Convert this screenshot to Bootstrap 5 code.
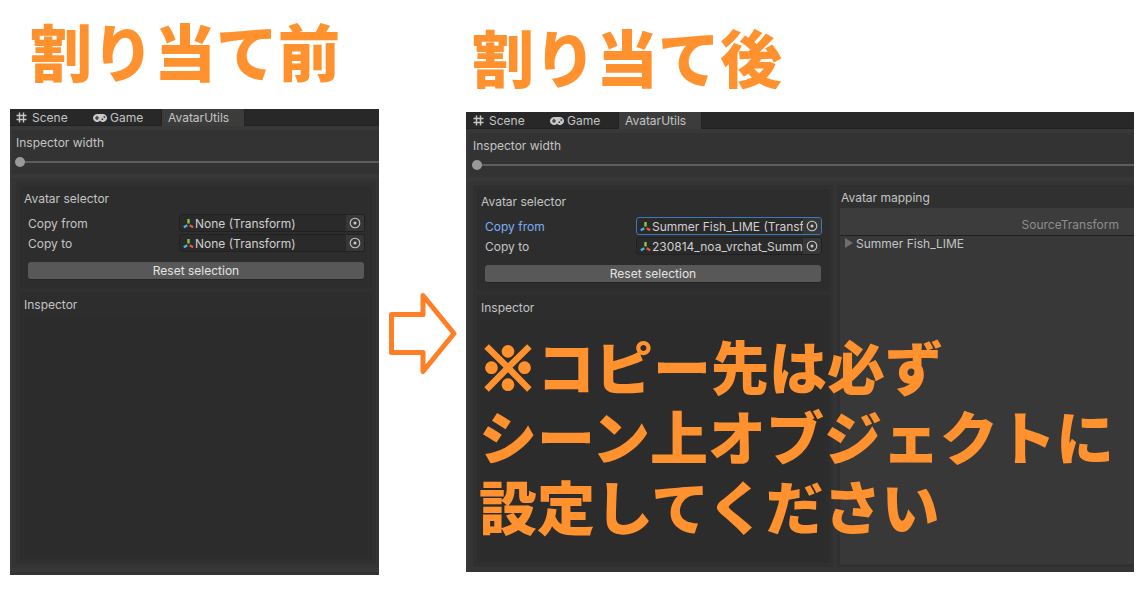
<!DOCTYPE html>
<html lang="ja">
<head>
<meta charset="utf-8">
<meta name="viewport" content="width=device-width, initial-scale=1">
<title>AvatarUtils</title>
<link href="https://cdn.jsdelivr.net/npm/bootstrap@5.3.0/dist/css/bootstrap.min.css" rel="stylesheet">
<style>
  body { background: #fff; font-family: Inter, "Liberation Sans", sans-serif; font-size: 12px; line-height: 16px; color: #c4c4c4; }
  h1, .note { font-family: "Noto Sans CJK JP", sans-serif; font-weight: 900; color: #ff922e; white-space: nowrap; margin: 0; }
  h1 { font-size: 62px; line-height: 100px; padding: 0 0 9px 20px; }
  h2, label { font-size: 12px; line-height: 16px; font-weight: 400; margin: 0; }
  button, input { font: inherit; color: inherit; }
  .page { padding: 0 10px; }
  .before { flex: 369 1 0; min-width: 0; }
  .after { flex: 668 1 0; min-width: 0; }
  .after h1 { line-height: 112px; padding: 0 0 0 6px; }
  .between { flex: 0 0 87px; padding: 292px 0 0 8px; }
  .editor { background: #383838; overflow: hidden; border-bottom: 3px solid #343434; padding-bottom: 4px; }
  .after .editor { border-bottom-width: 1px; padding-bottom: 0; }
  .after .tabs, .after .tools { padding-left: 1px; }
  .tabs { background: #282828; height: 17px; border-bottom: 1px solid #222; }
  .tabs button { background: none; border: 0; height: 17px; padding: 0 0 0 6px; gap: 4px; line-height: 16px; white-space: nowrap; text-align: left; }
  .tabs .scene { width: 77px; }
  .tabs .game { width: 74px; gap: 3px; }
  .tabs .active { width: 84px; background: #3c3c3c; border-left: 1px solid #222; border-right: 1px solid #242424; }
  .width-box { background: #333; margin: 4px 0 4px 2px; height: 44px; padding: 5px 0 0 4px; overflow: hidden; }
  .width-box input { -webkit-appearance: none; appearance: none; display: block; width: calc(100% + 1px); height: 10px; margin: 6px 0 0 -1px; background: linear-gradient(#5e5e5e, #5e5e5e) 0 4px / 100% 2px no-repeat; }
  .width-box input::-webkit-slider-thumb { -webkit-appearance: none; width: 10px; height: 10px; border-radius: 50%; background: #999; }
  .main-box { background: #343434; margin-left: 2px; padding: 4px 3px 4px 4px; }
  .after .main-box { padding-right: 0; }
  .side { background: #303030; padding: 4px; gap: 4px; }
  .before .side { flex: 1 1 auto; min-width: 0; }
  .after .side { flex: 0 0 360px; }
  .selector { background: #2d2d2d; height: 102px; padding: 5px 7px 0 4px; }
  .inspector { background: #2d2d2d; height: 268px; padding: 5px 4px 4px; }
  .inspector .list { background: #2c2c2c; margin-top: 4px; }
  .rows { margin: 7px 0 10px 4px; gap: 2px; }
  .rows label { flex: 1 1 0; line-height: 18px; padding-top: 1px; margin-bottom: -1px; }
  .field { flex: 0 0 186px; height: 18px; background: #2a2a2a; border: 1px solid #212121; border-radius: 3px; overflow: hidden; padding-left: 3px; }
  .field input { flex: 1 1 0; min-width: 0; background: none; border: 0; outline: 0; padding: 1px 0 0 1px; height: 16px; color: #d0d0d0; }
  .field button { flex: 0 0 18px; height: 16px; border: 0; padding: 0; background: #373737; }
  .picked label { color: #7badf5; }
  .picked .field { border-color: #3a79bb; }
  .reset { display: block; height: 18px; margin-left: 4px; width: calc(100% - 5px); padding: 0; border: 0; border-bottom: 1px solid #242424; border-radius: 3px; background: #585858; color: #e4e4e4; line-height: 18px; }
  .mapping { flex: 1 1 0; min-width: 0; background: #303030; margin-left: 4px; padding: 5px 0 3px 3px; }
  .mapping h2 { padding-left: 1px; }
  .mapping table { width: 100%; margin-top: 2px; }
  .mapping th { background: #3c3c3c; height: 27px; border-bottom: 1px solid #1f1f1f; font-weight: 400; color: #8e8e8e; text-align: right; vertical-align: bottom; padding: 0 15px 2px 0; }
  .mapping td { background: #383838; height: 329px; vertical-align: top; padding: 0 0 0 5px; }
  .mapping td button { border: 0; padding: 0; background: none; gap: 3px; line-height: 15px; }
  .note { position: absolute; left: 13px; top: 218px; font-size: 58px; line-height: 70px; pointer-events: none; }
  .note .mark-sign { -webkit-text-stroke: 4px #ff922e; }
</style>
</head>
<body>
<svg class="d-none" aria-hidden="true">
  <symbol id="axes" viewBox="0 0 11 11"><path d="M5.500 1v4.500" stroke="#8dc63f" stroke-width="2.400"/><path d="M4.300 7.300 .8 9.300" stroke="#4fb4e0" stroke-width="2.200"/><path d="m6.700 7.300 3.500 2" stroke="#e8592f" stroke-width="2.200"/></symbol>
  <symbol id="pick" viewBox="0 0 12 12"><circle cx="6" cy="6" r="4.800" fill="none" stroke="#c8c8c8" stroke-width="1.100"/><circle cx="6" cy="6" r="1.500" fill="#c8c8c8"/></symbol>
  <symbol id="grid" viewBox="0 0 12 12"><path d="M3.500 .5v10M7.500 .5v10M.5 3.500h10M.5 7.500h10" stroke="#c8c8c8" stroke-width="1.400"/></symbol>
  <symbol id="pad" viewBox="0 0 14 8"><path fill="#c8c8c8" fill-rule="evenodd" d="M4 0h6a4 4 0 1 1-2.400 7.200L7 6.600l-.6.6A4 4 0 1 1 4 0Zm-.6 2v1.400H2v1.200h1.400V6h1.200V4.600H6V3.400H4.600V2Zm5.200 2.500v1.500h1.500V4.500Zm2-2.200v1.500h1.500V2.300Z"/></symbol>
</svg>

<main class="page d-flex align-items-start">
  <section class="before">
    <h1>割り当て前</h1>
    <div class="editor">
      <div class="tabs d-flex">
        <button type="button" class="scene d-flex align-items-center"><svg width="12" height="12"><use href="#grid"/></svg>Scene</button>
        <button type="button" class="game d-flex align-items-center"><svg width="14" height="8"><use href="#pad"/></svg>Game</button>
        <button type="button" class="active">AvatarUtils</button>
      </div>
      <div class="tools">
        <div class="width-box">
          <label for="w1">Inspector width</label>
          <input type="range" id="w1" min="0" max="100" value="0">
        </div>
        <div class="main-box d-flex">
          <div class="side d-flex flex-column">
            <div class="selector">
              <h2>Avatar selector</h2>
              <div class="rows d-flex flex-column">
                <div class="d-flex align-items-center">
                  <label for="from1">Copy from</label>
                  <div class="field d-flex align-items-center"><svg width="11" height="11"><use href="#axes"/></svg><input id="from1" readonly value="None (Transform)"><button type="button" aria-label="Pick" class="d-flex align-items-center justify-content-center"><svg width="12" height="12"><use href="#pick"/></svg></button></div>
                </div>
                <div class="d-flex align-items-center">
                  <label for="to1">Copy to</label>
                  <div class="field d-flex align-items-center"><svg width="11" height="11"><use href="#axes"/></svg><input id="to1" readonly value="None (Transform)"><button type="button" aria-label="Pick" class="d-flex align-items-center justify-content-center"><svg width="12" height="12"><use href="#pick"/></svg></button></div>
                </div>
              </div>
              <button type="button" class="reset">Reset selection</button>
            </div>
            <div class="inspector d-flex flex-column">
              <h2>Inspector</h2>
              <div class="list flex-grow-1"></div>
            </div>
          </div>
        </div>
      </div>
    </div>
  </section>

  <div class="between">
    <svg width="70" height="83" viewBox="0 0 70 83" aria-hidden="true"><path d="M4.500 22.500H36V3.500L67 41.500 36 79.500V60.500H4.500Z" fill="none" stroke="#ff7f27" stroke-width="5" stroke-linejoin="round"/></svg>
  </div>

  <section class="after">
    <h1>割り当て後</h1>
    <div class="position-relative">
      <div class="editor">
        <div class="tabs d-flex">
          <button type="button" class="scene d-flex align-items-center"><svg width="12" height="12"><use href="#grid"/></svg>Scene</button>
          <button type="button" class="game d-flex align-items-center"><svg width="14" height="8"><use href="#pad"/></svg>Game</button>
          <button type="button" class="active">AvatarUtils</button>
        </div>
        <div class="tools">
          <div class="width-box">
            <label for="w2">Inspector width</label>
            <input type="range" id="w2" min="0" max="100" value="0">
          </div>
          <div class="main-box d-flex">
            <div class="side d-flex flex-column">
              <div class="selector">
                <h2>Avatar selector</h2>
                <div class="rows d-flex flex-column">
                  <div class="picked d-flex align-items-center">
                    <label for="from2">Copy from</label>
                    <div class="field d-flex align-items-center"><svg width="11" height="11"><use href="#axes"/></svg><input id="from2" readonly value="Summer Fish_LIME (Transform)"><button type="button" aria-label="Pick" class="d-flex align-items-center justify-content-center"><svg width="12" height="12"><use href="#pick"/></svg></button></div>
                  </div>
                  <div class="d-flex align-items-center">
                    <label for="to2">Copy to</label>
                    <div class="field d-flex align-items-center"><svg width="11" height="11"><use href="#axes"/></svg><input id="to2" readonly value="230814_noa_vrchat_Summer"><button type="button" aria-label="Pick" class="d-flex align-items-center justify-content-center"><svg width="12" height="12"><use href="#pick"/></svg></button></div>
                  </div>
                </div>
                <button type="button" class="reset">Reset selection</button>
              </div>
              <div class="inspector d-flex flex-column">
                <h2>Inspector</h2>
                <div class="list flex-grow-1"></div>
              </div>
            </div>
            <div class="mapping">
              <h2>Avatar mapping</h2>
              <table>
                <thead><tr><th scope="col">SourceTransform</th></tr></thead>
                <tbody><tr><td><button type="button" class="d-flex align-items-center"><svg width="8" height="10"><path d="M0 0 8 5 0 10Z" fill="#6e6e6e"/></svg>Summer Fish_LIME</button></td></tr></tbody>
              </table>
            </div>
          </div>
        </div>
      </div>
      <p class="note"><span class="mark-sign">※</span>コピー先は必ず<br>シーン上オブジェクトに<br>設定してください</p>
    </div>
  </section>
</main>
<script src="https://cdn.jsdelivr.net/npm/bootstrap@5.3.0/dist/js/bootstrap.bundle.min.js"></script>
</body>
</html>
